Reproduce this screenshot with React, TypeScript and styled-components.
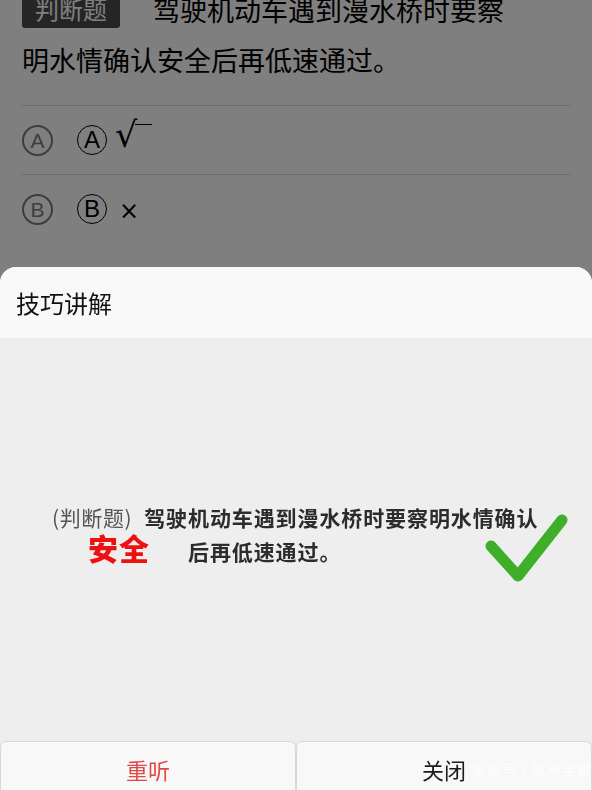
import React from "react";
import styled, { createGlobalStyle } from "styled-components";

const Global = createGlobalStyle`
  html, body { margin: 0; padding: 0; overflow: hidden; height: 790px; }
  body { background: #ffffff; font-family: "Noto Sans CJK SC", "Noto Sans", sans-serif; }
`;

const Page = styled.div`
  position: relative;
  width: 592px;
  height: 790px;
  overflow: hidden;
  background: #ffffff;
`;

const Question = styled.div`
  width: 498px;
  margin: -15px 0 0 22px;
  padding-bottom: 20px;
  font-size: 27px;
  line-height: 50px;
  color: #000;
`;

const Tag = styled.span`
  display: inline-block;
  line-height: 38px;
  padding: 0 13px;
  margin-right: 33px;
  background: #4a4a4a;
  color: #ffffff;
  font-size: 24px;
  border-radius: 3px;
  vertical-align: 2px;
`;

const Options = styled.div`
  margin: 0 22px;
`;

const OptionRow = styled.div`
  height: 68px;
  border-top: 1.5px solid #dadada;
  display: flex;
  align-items: center;
  gap: 24px;
`;

const Radio = styled.span<{ $big?: boolean }>`
  box-sizing: border-box;
  width: ${(p) => (p.$big ? 30 : 31)}px;
  height: ${(p) => (p.$big ? 30 : 31)}px;
  border-radius: 50%;
  border: ${(p) => (p.$big ? "1.5px solid #000" : "2px solid #7a7a7a")};
  color: ${(p) => (p.$big ? "#000" : "#7a7a7a")};
  display: inline-flex;
  align-items: center;
  justify-content: center;
  font-family: "Liberation Sans", Arial, sans-serif;
  font-size: ${(p) => (p.$big ? 24 : 21)}px;
  line-height: 1;
  flex: none;
`;

const OptionContent = styled.div`
  display: flex;
  align-items: center;
  gap: 8px;
  font-family: "DejaVu Sans", sans-serif;
  color: #000;
`;

const Root = styled.span`
  display: inline-flex;
  align-items: flex-start;
  height: 30px;
  margin-top: -6px;
`;

const RootSign = styled.span`
  font-size: 35px;
  line-height: 36px;
  margin-top: -5px;
`;

const Overline = styled.span`
  width: 17px;
  height: 0;
  border-top: 1.5px solid #000;
  margin-top: 2px;
  margin-left: -2px;
`;

const Cross = styled.span`
  font-size: 24px;
  line-height: 30px;
  margin-top: 4px;
  margin-left: 4px;
`;

const Overlay = styled.div`
  position: fixed;
  inset: 0;
  background: rgba(0, 0, 0, 0.5);
`;

const Sheet = styled.div`
  position: fixed;
  left: 0;
  right: 0;
  top: 267px;
  height: 523px;
  display: flex;
  flex-direction: column;
  border-radius: 16px 16px 0 0;
  overflow: hidden;
  background: #eeeeee;
`;

const SheetHeader = styled.div`
  height: 71px;
  flex: none;
  background: #f8f8f8;
  display: flex;
  align-items: center;
  padding-left: 16px;
  font-size: 24px;
  color: #111;
`;

const SheetBody = styled.div`
  flex: 1;
  display: flex;
  flex-direction: column;
  justify-content: center;
  padding: 0 0 0 52px;
`;

const Explain = styled.div`
  position: relative;
  display: flex;
  flex-direction: column;
  margin-top: -11px;
`;

const ExplainRow = styled.div<{ $indent?: number }>`
  display: flex;
  align-items: baseline;
  line-height: 30px;
  padding-left: ${(p) => p.$indent ?? 0}px;
`;

const TypeLabel = styled.span`
  font-size: 21px;
  color: #555;
  margin-right: 12px;
  letter-spacing: 0.6px;
`;

const BoldText = styled.span`
  font-size: 21px;
  font-weight: 700;
  color: #2c2c2c;
  letter-spacing: 0.9px;
`;

const Answer = styled.span`
  font-size: 30px;
  font-weight: 900;
  color: #ee1111;
  margin-right: 38px;
  letter-spacing: 1px;
`;

const Check = styled.svg`
  position: absolute;
  left: 432px;
  top: 12px;
`;

const Footer = styled.div`
  height: 54px;
  flex: none;
  display: grid;
  grid-template-columns: 296px 1fr;
  margin-bottom: -5px;
  position: relative;
`;

const FooterButton = styled.div<{ $danger?: boolean }>`
  background: #f8f8f8;
  border: 1px solid #d8d8d8;
  border-bottom: none;
  border-radius: 6px 6px 0 0;
  display: flex;
  align-items: center;
  justify-content: center;
  font-size: 22px;
  color: ${(p) => (p.$danger ? "#e04848" : "#1a1a1a")};
`;

const Watermark = styled.span`
  position: absolute;
  left: 472px;
  top: 18px;
  font-size: 14px;
  color: rgba(255, 255, 255, 0.75);
  letter-spacing: 1px;
`;

export default function App() {
  return (
    <Page>
      <Global />
      <Question>
        <Tag>判断题</Tag>驾驶机动车遇到漫水桥时要察明水情确认安全后再低速通过。
      </Question>
      <Options>
        <OptionRow>
          <Radio>A</Radio>
          <OptionContent>
            <Radio $big>A</Radio>
            <Root>
              <RootSign>√</RootSign>
              <Overline />
            </Root>
          </OptionContent>
        </OptionRow>
        <OptionRow>
          <Radio>B</Radio>
          <OptionContent>
            <Radio $big>B</Radio>
            <Cross>×</Cross>
          </OptionContent>
        </OptionRow>
      </Options>
      <Overlay />
      <Sheet>
        <SheetHeader>技巧讲解</SheetHeader>
        <SheetBody>
          <Explain>
            <ExplainRow>
              <TypeLabel>(判断题)</TypeLabel>
              <BoldText>驾驶机动车遇到漫水桥时要察明水情确认</BoldText>
            </ExplainRow>
            <ExplainRow $indent={36}>
              <Answer>安全</Answer>
              <BoldText>后再低速通过。</BoldText>
            </ExplainRow>
            <Check width="84" height="68" viewBox="0 0 84 68">
              <path
                d="M7 32 L34 62 L78 6"
                fill="none"
                stroke="#3fae29"
                strokeWidth="11"
                strokeLinecap="round"
                strokeLinejoin="round"
              />
            </Check>
          </Explain>
        </SheetBody>
        <Footer>
          <FooterButton $danger>重听</FooterButton>
          <FooterButton>关闭</FooterButton>
          <Watermark>头条号 / 驾考宝典</Watermark>
        </Footer>
      </Sheet>
    </Page>
  );
}
